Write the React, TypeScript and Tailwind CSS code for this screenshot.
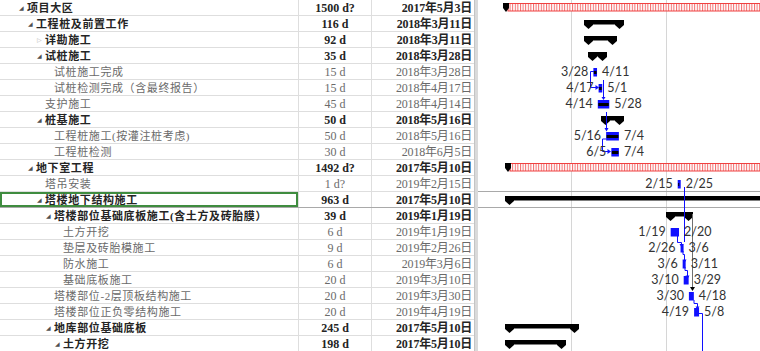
import React from "react";

interface RowProps {
  name: string;
  lvl: number;
  sum?: boolean;
  collapsed?: boolean;
  dur: string;
  start: string;
}

const rows: RowProps[] = [
  { name: "项目大区", lvl: 0, sum: true, dur: "1500 d?", start: "2017年5月3日" },
  { name: "工程桩及前置工作", lvl: 1, sum: true, dur: "116 d", start: "2018年3月11日" },
  { name: "详勘施工", lvl: 2, sum: true, collapsed: true, dur: "92 d", start: "2018年3月11日" },
  { name: "试桩施工", lvl: 2, sum: true, dur: "35 d", start: "2018年3月28日" },
  { name: "试桩施工完成", lvl: 3, dur: "15 d", start: "2018年3月28日" },
  { name: "试桩检测完成（含最终报告）", lvl: 3, dur: "15 d", start: "2018年4月17日" },
  { name: "支护施工", lvl: 2, dur: "45 d", start: "2018年4月14日" },
  { name: "桩基施工", lvl: 2, sum: true, dur: "50 d", start: "2018年5月16日" },
  { name: "工程桩施工(按灌注桩考虑)", lvl: 3, dur: "50 d", start: "2018年5月16日" },
  { name: "工程桩检测", lvl: 3, dur: "30 d", start: "2018年6月5日" },
  { name: "地下室工程", lvl: 1, sum: true, dur: "1492 d?", start: "2017年5月10日" },
  { name: "塔吊安装", lvl: 2, dur: "1 d?", start: "2019年2月15日" },
  { name: "塔楼地下结构施工", lvl: 2, sum: true, dur: "963 d", start: "2017年5月10日" },
  { name: "塔楼部位基础底板施工(含土方及砖胎膜）", lvl: 3, sum: true, dur: "39 d", start: "2019年1月19日" },
  { name: "土方开挖", lvl: 4, dur: "6 d", start: "2019年1月19日" },
  { name: "垫层及砖胎模施工", lvl: 4, dur: "9 d", start: "2019年2月26日" },
  { name: "防水施工", lvl: 4, dur: "6 d", start: "2019年3月6日" },
  { name: "基础底板施工", lvl: 4, dur: "20 d", start: "2019年3月10日" },
  { name: "塔楼部位-2层顶板结构施工", lvl: 3, dur: "20 d", start: "2019年3月30日" },
  { name: "塔楼部位正负零结构施工", lvl: 3, dur: "20 d", start: "2019年4月19日" },
  { name: "地库部位基础底板", lvl: 3, sum: true, dur: "245 d", start: "2017年5月10日" },
  { name: "土方开挖", lvl: 4, sum: true, dur: "198 d", start: "2017年5月10日" },
];

const sumPad = ["pl-[19px]", "pl-[28px]", "pl-[37px]", "pl-[46px]", "pl-[55px]"];
const leafPad = ["pl-[27px]", "pl-[36px]", "pl-[45px]", "pl-[54px]", "pl-[63px]"];

// timescale: jan 1 2018 sits at x=571, one year ~95px
const X0 = Date.UTC(2018, 0, 1);
const PX = 95 / 365;
const dx = (y: number, m: number, d: number) =>
  571 + ((Date.UTC(y, m - 1, d) - X0) / 86400000) * PX;

interface TaskBar {
  row: number;
  s: [number, number, number];
  f: [number, number, number];
  ls: string;
  lf: string;
  done?: number;
}

const tasks: TaskBar[] = [
  { row: 4, s: [2018, 3, 28], f: [2018, 4, 11], ls: "3/28", lf: "4/11", done: 1 },
  { row: 5, s: [2018, 4, 17], f: [2018, 5, 1], ls: "4/17", lf: "5/1", done: 1 },
  { row: 6, s: [2018, 4, 14], f: [2018, 5, 28], ls: "4/14", lf: "5/28", done: 1 },
  { row: 8, s: [2018, 5, 16], f: [2018, 7, 4], ls: "5/16", lf: "7/4", done: 1 },
  { row: 9, s: [2018, 6, 5], f: [2018, 7, 4], ls: "6/5", lf: "7/4", done: 1 },
  { row: 11, s: [2019, 2, 15], f: [2019, 2, 25], ls: "2/15", lf: "2/25", done: 0.5 },
  { row: 14, s: [2019, 1, 19], f: [2019, 2, 20], ls: "1/19", lf: "2/20" },
  { row: 15, s: [2019, 2, 26], f: [2019, 3, 6], ls: "2/26", lf: "3/6" },
  { row: 16, s: [2019, 3, 6], f: [2019, 3, 11], ls: "3/6", lf: "3/11" },
  { row: 17, s: [2019, 3, 10], f: [2019, 3, 29], ls: "3/10", lf: "3/29" },
  { row: 18, s: [2019, 3, 30], f: [2019, 4, 18], ls: "3/30", lf: "4/18" },
  { row: 19, s: [2019, 4, 19], f: [2019, 5, 8], ls: "4/19", lf: "5/8" },
];

const summaries: { row: number; x1: number; x2: number }[] = [
  { row: 1, x1: 584, x2: 624 },
  { row: 2, x1: 584, x2: 617 },
  { row: 3, x1: 588, x2: 607 },
  { row: 7, x1: 601, x2: 624 },
  { row: 13, x1: 666, x2: 693 },
  { row: 20, x1: 505, x2: 579 },
  { row: 21, x1: 505, x2: 566 },
  { row: 12, x1: 505, x2: 790 },
];

const SummaryBar = ({ row, x1, x2 }: { row: number; x1: number; x2: number }) => {
  const y0 = row * 16 + 4;
  return (
    <g fill="#000">
      <rect x={x1} y={y0} width={x2 - x1} height={4.5} />
      <polygon points={`${x1},${y0} ${x1 + 9},${y0} ${x1 + 9},${y0 + 5} ${x1 + 4.5},${y0 + 9} ${x1},${y0 + 5}`} />
      <polygon points={`${x2 - 9},${y0} ${x2},${y0} ${x2},${y0 + 5} ${x2 - 4.5},${y0 + 9} ${x2 - 9},${y0 + 5}`} />
    </g>
  );
};

const HatchBar = ({ row, x1 }: { row: number; x1: number }) => {
  const y0 = row * 16 + 3;
  return (
    <g>
      <rect x={x1 + 5} y={y0 + 0.5} width={300} height={7.5} fill="url(#hatch)" stroke="#f04040" strokeWidth={1} />
      <polygon points={`${x1},${y0} ${x1 + 6},${y0} ${x1 + 6},${y0 + 5} ${x1 + 3},${y0 + 9} ${x1},${y0 + 5}`} fill="#000" />
    </g>
  );
};

const Gantt = () => {
  const blue = "#1010ff";
  return (
    <svg width={282} height={351} viewBox="478 0 282 351" className="block">
      <defs>
        <pattern id="hatch" width="2.6" height="8" patternUnits="userSpaceOnUse">
          <rect width="2.6" height="8" fill="#fff" />
          <rect width="1" height="8" fill="#f26a6a" />
        </pattern>
      </defs>
      <line x1={571.5} y1={0} x2={571.5} y2={351} stroke="#d6d6d6" />
      <line x1={666.5} y1={0} x2={666.5} y2={351} stroke="#d6d6d6" />
      <line x1={478} y1={191.5} x2={760} y2={191.5} stroke="#a9a9a9" />
      <line x1={478} y1={207.5} x2={760} y2={207.5} stroke="#a9a9a9" />

      <HatchBar row={0} x1={503} />
      <HatchBar row={10} x1={505} />
      {summaries.map((s) => (
        <SummaryBar key={s.row} {...s} />
      ))}

      {/* links */}
      <g stroke={blue} strokeWidth={1} fill="none">
        <path d="M594 71.5 H590.5 V87.5 H596" />
        <path d="M603.5 80 V97" />
        <path d="M606.5 112 V128" />
        <path d="M606 139 H602.5 V151.5 H608" />
        <path d="M684.5 187 V242" />
        <path d="M677.5 236 V242.5 H681.5 V245" />
        <path d="M683 251 V254.5 H684.5 V260" />
        <path d="M685 267 V270.5 H687.5 V276" />
        <path d="M694 300 V303.5 H697.5 V307" />
        <path d="M699 313.5 H702.5 V351" />
      </g>
      <path d="M692.5 214 V287" stroke="#707070" fill="none" />
      <g fill={blue}>
        <polygon points="595.5,85 599,87.5 595.5,90" />
        <polygon points="601.5,97 605.5,97 603.5,100" />
        <polygon points="604.5,128 608.5,128 606.5,131.5" />
        <polygon points="607.5,149 611,151.5 607.5,154" />
        <polygon points="679.5,244 683.5,244 681.5,247" />
        <polygon points="682.5,259.5 686.5,259.5 684.5,263" />
        <polygon points="685.5,275.5 689.5,275.5 687.5,279" />
        <polygon points="695.5,306.5 699.5,306.5 697.5,310" />
      </g>
      <polygon points="690,287 695,287 692.5,291" fill="#000" />

      {tasks.map((t) => {
        const a = dx(...t.s);
        const b = Math.max(dx(...t.f), a + 3);
        const y = t.row * 16 + 4;
        const cy = t.row * 16 + 12;
        return (
          <g key={t.row}>
            <rect x={a} y={y} width={b - a} height={8.5} fill={blue} />
            {t.done ? (
              <rect x={a + 0.5} y={y + 3} width={(b - a - 1) * t.done} height={3} fill="#000" />
            ) : null}
            <text
              x={a - 5}
              y={cy}
              textAnchor="end"
              fontFamily="Lato, 'Open Sans', sans-serif"
              fontSize={12.5}
              fill="#333"
            >
              {t.ls}
            </text>
            <text
              x={b + 5}
              y={cy}
              fontFamily="Lato, 'Open Sans', sans-serif"
              fontSize={12.5}
              fill="#333"
            >
              {t.lf}
            </text>
          </g>
        );
      })}
    </svg>
  );
};

export default function App() {
  return (
    <div className="flex w-[760px] h-[351px] overflow-hidden bg-white">
      <div className="w-[474px] flex flex-col shrink-0">
        {rows.map((r, i) => {
          const sel = i === 12;
          const tone = r.sum ? "font-bold text-[#242424]" : "text-[#6a6a6a]";
          return (
            <div
              key={i}
              className={
                sel
                  ? "flex h-4 shrink-0 border-b border-[#a9a9a9] text-[11px] leading-4"
                  : "flex h-4 shrink-0 border-b border-[#dedede] text-[11px] leading-4"
              }
            >
              <div
                className={`w-[299px] shrink-0 flex items-center overflow-hidden whitespace-nowrap border-r border-[#dedede] ${
                  r.sum ? sumPad[r.lvl] : leafPad[r.lvl]
                } ${sel ? "ring-2 ring-inset ring-[#3f8c3f]" : ""}`}
              >
                {r.sum ? (
                  <span
                    className={
                      r.collapsed
                        ? "w-[8px] shrink-0 text-[6px] text-[#b0b0b0] font-normal font-['DejaVu_Sans']"
                        : "w-[8px] shrink-0 text-[6px] text-[#505050] font-normal font-['DejaVu_Sans']"
                    }
                  >
                    {r.collapsed ? "▷" : "◢"}
                  </span>
                ) : null}
                <span
                  className={`font-['Liberation_Serif','Noto_Sans_CJK_SC',serif] tracking-[0.6px] ${tone}`}
                >
                  {r.name}
                </span>
              </div>
              <div
                className={`w-[73px] shrink-0 text-center border-r border-[#dedede] font-['Liberation_Serif','Noto_Sans_CJK_SC',serif] text-[12px] ${tone}`}
              >
                {r.dur}
              </div>
              <div
                className={`flex-1 text-right pr-[2px] font-['Liberation_Serif','Noto_Sans_CJK_SC',serif] text-[12px] tracking-[-0.2px] ${tone}`}
              >
                {r.start}
              </div>
            </div>
          );
        })}
      </div>
      <div className="w-[4px] shrink-0 bg-[#dadada] border-l border-[#c4c4c4]" />
      <div className="flex-1 relative">
        <Gantt />
      </div>
    </div>
  );
}
